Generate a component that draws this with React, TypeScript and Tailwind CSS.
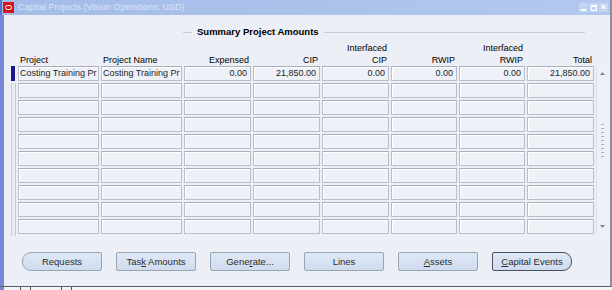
import React from 'react';

const columns = [
  { key: 'project', top: '', label: 'Project', w: 'w-[81px]', align: 'left' },
  { key: 'name', top: '', label: 'Project Name', w: 'w-[81px]', align: 'left' },
  { key: 'expensed', top: '', label: 'Expensed', w: 'w-[67px]', align: 'right' },
  { key: 'cip', top: '', label: 'CIP', w: 'w-[67px]', align: 'right' },
  { key: 'icip', top: 'Interfaced', label: 'CIP', w: 'w-[67px]', align: 'right' },
  { key: 'rwip', top: '', label: 'RWIP', w: 'w-[66px]', align: 'right' },
  { key: 'irwip', top: 'Interfaced', label: 'RWIP', w: 'w-[66px]', align: 'right' },
  { key: 'total', top: '', label: 'Total', w: 'w-[67px]', align: 'right' },
];

const firstRow: Record<string, string> = {
  project: 'Costing Training Pr',
  name: 'Costing Training Pr',
  expensed: '0.00',
  cip: '21,850.00',
  icip: '0.00',
  rwip: '0.00',
  irwip: '0.00',
  total: '21,850.00',
};

const buttons: { label: React.ReactNode; shape: string }[] = [
  { label: 'Requests', shape: 'rounded-l-[9px] rounded-r-[2px] border-[#9aa3b0]' },
  { label: <>Tas<u>k</u> Amounts</>, shape: 'rounded-[2px] border-[#9aa3b0]' },
  { label: <>Gene<u>r</u>ate...</>, shape: 'rounded-[2px] border-[#9aa3b0]' },
  { label: 'Lines', shape: 'rounded-[2px] border-[#9aa3b0]' },
  { label: <><u>A</u>ssets</>, shape: 'rounded-[2px] border-[#9aa3b0]' },
  { label: <><u>C</u>apital Events</>, shape: 'rounded-r-[9px] rounded-l-[2px] border-[#4a5060]' },
];

const rows = Array.from({ length: 10 }, (_, i) => i);

export default function App() {
  return (
    <div
      className="w-[612px] h-[290px] overflow-hidden bg-[#e6e6e6] flex flex-col"
      style={{ fontFamily: '"Liberation Sans", Arial, sans-serif' }}
    >
      <div className="h-[287px] flex flex-col border-r-2 border-r-[#8a8f99] border-b border-b-[#5a5e66]">
        {/* Title bar */}
        <div className="h-[15px] flex items-center bg-gradient-to-r from-[#a3bce8] to-[#b2c8ee] border-l-2 border-l-[#5c70c6] pl-[1px] pr-[2px]">
          <div className="w-[11px] h-[11px] bg-[#d8141c] flex items-center justify-center">
            <div className="w-[7px] h-[5px] rounded-full border border-white" />
          </div>
          <span className="ml-[4px] text-[9px] leading-none text-[#dae5f8]">
            Capital Projects (Vision Operations: USD)
          </span>
          <div className="ml-auto flex gap-[1px]">
            <div className="w-[9px] h-[9px] bg-[#c4d6f2] flex items-end justify-center pb-[1px]">
              <div className="w-[5px] h-[2px] bg-white" />
            </div>
            <div className="w-[9px] h-[9px] bg-[#c4d6f2] flex items-center justify-center">
              <div className="w-[6px] h-[6px] border border-white border-t-2" />
            </div>
            <div className="w-[9px] h-[9px] bg-[#c4d6f2] flex items-center justify-center text-white text-[9px] font-bold leading-none">
              ×
            </div>
          </div>
        </div>

        {/* Body */}
        <div className="flex-1 flex flex-col bg-[#eceff6] border-l-4 border-l-[#7888d6] text-[9px] text-black">
          {/* Section title */}
          <div className="mt-[11px] h-[12px] flex items-center pl-[179px] pr-[25px]">
            <div className="w-[9px] h-px bg-[#c8ccd4]" />
            <span className="px-[5px] text-[9.5px] font-bold leading-none">Summary Project Amounts</span>
            <div className="flex-1 h-px bg-[#c8ccd4]" />
          </div>

          {/* Column headers */}
          <div className="mt-[3px] h-[25px] flex pl-[14px] gap-[2px]">
            {columns.map((c) => (
              <div
                key={c.key}
                className={`${c.w} flex flex-col justify-end leading-[12px] ${
                  c.align === 'right' ? 'items-end pr-[2px]' : 'items-start pl-[2px]'
                }`}
              >
                {c.top && <span>{c.top}</span>}
                <span>{c.label}</span>
              </div>
            ))}
          </div>

          {/* Grid + scrollbar */}
          <div className="flex pl-[7px]">
            <div className="flex flex-col gap-[2px]">
              {rows.map((r) => (
                <div key={r} className="h-[15px] flex gap-[2px]">
                  {r === 0 ? (
                    <div className="w-[5px] flex">
                      <div className="w-[4px] h-[15px] bg-[#1a1a86]" />
                    </div>
                  ) : (
                    <div className="w-[5px] h-[17px] -mb-[2px] border-l border-r border-[#c6cad2] bg-[#e8ebf2]" />
                  )}
                  {columns.map((c) => (
                    <div
                      key={c.key}
                      className={`${c.w} h-[15px] bg-[#eef1f8] border border-[#b9bec8] border-t-[#a9aeb8] shadow-[inset_1px_1px_0_#ffffff] flex items-center leading-none text-[#1e1e1e] ${
                        c.align === 'right' ? 'justify-end pr-[3px]' : 'justify-start pl-[1px]'
                      }`}
                    >
                      {r === 0 ? <span className="whitespace-nowrap overflow-hidden">{firstRow[c.key]}</span> : null}
                    </div>
                  ))}
                </div>
              ))}
            </div>

            <div className="ml-[2px] w-[11px] h-[168px] flex flex-col items-center border-l border-[#dde1ea] bg-[#eef1f8]">
              <svg width="9" height="9" viewBox="0 0 9 9" className="mt-[3px]">
                <path d="M2 6 L4.5 3 L7 6 Z" fill="#7d8593" />
              </svg>
              <div className="mt-[46px] flex flex-col gap-[3px]">
                {Array.from({ length: 9 }, (_, i) => (
                  <div key={i} className="w-[3px] h-[1px] bg-[#a9b0be]" />
                ))}
              </div>
              <svg width="9" height="9" viewBox="0 0 9 9" className="mt-auto mb-[3px]">
                <path d="M2 3 L4.5 6 L7 3 Z" fill="#7d8593" />
              </svg>
            </div>
          </div>

          {/* Buttons */}
          <div className="mt-[18px] flex gap-[14px] pl-[18px]">
            {buttons.map((b, i) => (
              <button
                key={i}
                type="button"
                className={`w-[80px] h-[19px] border bg-gradient-to-b from-[#dfe8f5] to-[#cfdcee] text-[9.5px] leading-none text-[#2c2c2c] ${b.shape}`}
              >
                {b.label}
              </button>
            ))}
          </div>
        </div>
      </div>
      <div className="flex-1 flex bg-[#f4f4f4]">
        <div className="w-[4px] bg-[#7888d6]" />
        <div className="ml-[16px] w-px bg-[#555]" />
        <div className="ml-[9px] w-px bg-[#555]" />
        <div className="ml-[30px] w-px bg-[#555]" />
        <div className="ml-[9px] w-px bg-[#555]" />
      </div>
    </div>
  );
}
